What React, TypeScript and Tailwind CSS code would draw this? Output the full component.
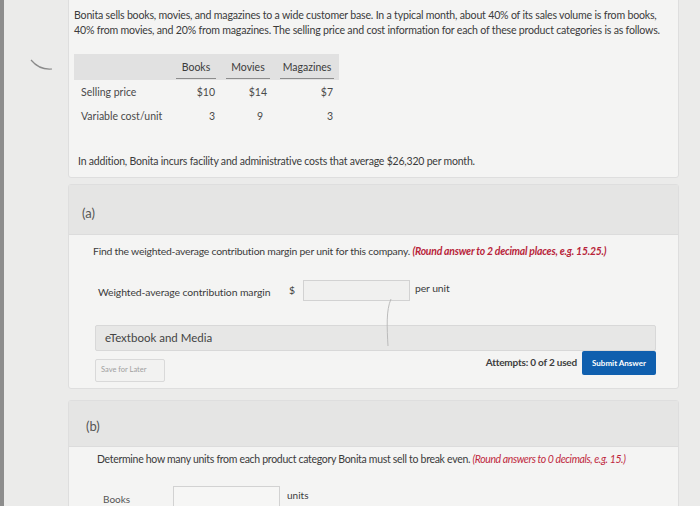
import React from 'react'

const Th = ({ children, w }: { children: React.ReactNode; w: string }) => (
  <th className={`${w} px-[5px] pt-[5px] pb-0 font-normal text-right`}>
    <div className="border-b-[1.5px] border-[#8c8c8c] pb-[3px] text-center">{children}</div>
  </th>
)

export default function App() {
  return (
    <div className="relative h-[506px] overflow-hidden bg-[#ebebea] border-l-[4px] border-[#8d8d8d] font-['Lato','Noto_Sans',sans-serif] text-[#3b3b3b]">
      {/* marks on the photographed screen */}
      <svg className="absolute left-[26px] top-[58px]" width="24" height="16" viewBox="0 0 24 16">
        <path d="M1 2 C 6 8, 12 12, 22 11" stroke="#8a8a8a" strokeWidth="1.2" fill="none" />
      </svg>
      <svg className="absolute left-[378px] top-[298px]" width="12" height="50" viewBox="0 0 12 50">
        <path d="M9 1 C 4 12, 5 30, 6 48" stroke="#b5b5b5" strokeWidth="0.9" fill="none" />
      </svg>

      <div className="ml-[64px] w-[611px]">
        {/* problem statement */}
        <div className="mt-[-4px] h-[182px] border border-[#dedede] rounded-[3px] bg-[#f4f4f3] pl-[5px] pt-[11px]">
          <p className="text-[10.6px] leading-[15px] tracking-[-0.2px]">
            Bonita sells books, movies, and magazines to a wide customer base. In a typical month, about 40% of its sales volume is from books,
            <br />
            40% from movies, and 20% from magazines. The selling price and cost information for each of these product categories is as follows.
          </p>
          <table className="mt-[16px] text-[10.5px] border-collapse">
            <thead>
              <tr className="bg-[#e1e1e1] h-[26px]">
                <th className="w-[97px]" />
                <Th w="w-[50px]">Books</Th>
                <Th w="w-[54px]">Movies</Th>
                <Th w="w-[64px]">Magazines</Th>
              </tr>
            </thead>
            <tbody className="text-[#4a4a4a]">
              <tr className="h-[25px]">
                <td className="pl-[7px]">Selling price</td>
                <td className="text-right pr-[6px]">$10</td>
                <td className="text-right pr-[8px]">$14</td>
                <td className="text-right pr-[6px]">$7</td>
              </tr>
              <tr className="h-[24px]">
                <td className="pl-[7px]">Variable cost/unit</td>
                <td className="text-right pr-[6px]">3</td>
                <td className="text-right pr-[12px]">9</td>
                <td className="text-right pr-[6px]">3</td>
              </tr>
            </tbody>
          </table>
          <p className="mt-[25px] pl-[4px] text-[10.5px] tracking-[-0.2px]">
            In addition, Bonita incurs facility and administrative costs that average $26,320 per month.
          </p>
        </div>

        {/* part a */}
        <div className="mt-[6px] h-[205px] border border-[#dedede] rounded-[3px] bg-[#f4f4f3]">
          <div className="h-[50px] bg-[#e5e5e4] border-b border-[#dcdcdc] pl-[13px] pt-[22px] text-[13px] leading-none text-[#555]">(a)</div>
          <div className="px-[24px] pt-[9px]">
            <p className="text-[10.4px] tracking-[-0.22px]">
              Find the weighted-average contribution margin per unit for this company.{' '}
              <span className="italic font-bold text-[#b8243a]">(Round answer to 2 decimal places, e.g. 15.25.)</span>
            </p>
            <div className="mt-[20px] flex items-start text-[10.4px] tracking-[-0.1px]">
              <span className="ml-[5px] mt-[5px] w-[191px]">Weighted-average contribution margin</span>
              <span className="mt-[3px] w-[14px]">$</span>
              <div className="w-[107px] h-[21px] border border-[#d2d2d2] bg-[#f0f0ef]" />
              <span className="ml-[5px] mt-[1px]">per unit</span>
            </div>
            <div className="mt-[24px] ml-[2px] w-[561px] h-[26px] border border-[#d8d8d8] rounded-[2px] bg-[#e7e7e6] pl-[9px] flex items-center text-[11.5px] text-[#444]">
              eTextbook and Media
            </div>
            <div className="ml-[2px] w-[561px] flex items-start justify-between">
              <div className="mt-[8px] w-[70px] h-[23px] border border-[#d9d9d9] rounded-[2px] bg-[#f2f2f1] flex items-center pl-[5px] text-[7.5px] text-[#a0a0a0]">
                Save for Later
              </div>
              <div className="flex items-center">
                <span className="text-[10px] font-bold text-[#3d3d3d] mr-[5px] tracking-[-0.2px]">Attempts: 0 of 2 used</span>
                <div className="w-[74px] h-[24px] rounded-[2px] bg-[#0f5fae] text-white text-[8px] font-bold flex items-center justify-center">
                  Submit Answer
                </div>
              </div>
            </div>
          </div>
        </div>

        {/* part b */}
        <div className="mt-[11px] h-[140px] border border-[#dedede] rounded-[3px] bg-[#f4f4f3]">
          <div className="h-[46px] bg-[#e5e5e4] border-b border-[#dcdcdc] pl-[17px] pt-[19px] text-[13px] leading-none text-[#555]">(b)</div>
          <div className="pl-[28px] pt-[5px]">
            <p className="text-[10.5px] tracking-[-0.3px]">
              Determine how many units from each product category Bonita must sell to break even.{' '}
              <span className="italic text-[#c0283d] tracking-[-0.4px]">(Round answers to 0 decimals, e.g. 15.)</span>
            </p>
            <div className="mt-[18px] flex items-start text-[10px]">
              <span className="ml-[6px] mt-[6px] w-[70px] text-[#555]">Books</span>
              <div className="w-[107px] h-[22px] border border-[#d2d2d2] bg-[#f6f6f5]" />
              <span className="ml-[7px] mt-[2px]">units</span>
            </div>
          </div>
        </div>
      </div>
    </div>
  )
}
